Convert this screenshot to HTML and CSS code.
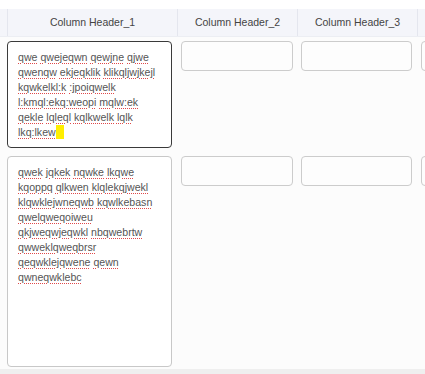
FILE: index.html
```html
<!DOCTYPE html>
<html>
<head>
<meta charset="utf-8">
<link rel="stylesheet" href="styles.css">
</head>
<body>
<div class="grid">
  <div class="header">
    <div class="hcell stub"></div>
    <div class="hcell c1">Column Header_1</div>
    <div class="hcell c2">Column Header_2</div>
    <div class="hcell c3">Column Header_3</div>
    <div class="hcell rest"></div>
  </div>
  <div class="row row1">
    <div class="cell c1">
      <div class="area focused">
        <div><u>qwe</u> <u>qwejeqwn</u> <u>qewjne</u> <u>qjwe</u></div>
        <div><u>qwenqw</u> <u>ekjeqklik</u> <u>klikqljwjkejl</u></div>
        <div><u>kqwkelkl:k</u> <u>:jpoiqwelk</u></div>
        <div><u>l:kmql:ekq:weopi</u> <u>mqlw:ek</u></div>
        <div><u>qekle</u> <u>lqleql</u> <u>kqlkwelk</u> <u>lqlk</u></div>
        <div><u>lkq:lkew</u><span class="hl"></span></div>
      </div>
    </div>
    <div class="cell c2"><div class="input"></div></div>
    <div class="cell c3"><div class="input"></div></div>
    <div class="cell rest"><div class="input"></div></div>
  </div>
  <div class="row row2">
    <div class="cell c1">
      <div class="area tall">
        <div><u>qwek</u> <u>jqkek</u> <u>nqwke</u> <u>lkqwe</u></div>
        <div><u>kqoppq</u> <u>qlkwen</u> <u>klqlekqjwekl</u></div>
        <div><u>klqwklejwneqwb</u> <u>kqwlkebasn</u></div>
        <div><u>qwelqweqoiweu</u></div>
        <div><u>qkjweqwjeqwkl</u> <u>nbqwebrtw</u></div>
        <div><u>qwweklqweqbrsr</u></div>
        <div><u>qeqwklejqwene</u> <u>qewn</u></div>
        <div><u>qwneqwklebc</u></div>
      </div>
    </div>
    <div class="cell c2"><div class="input"></div></div>
    <div class="cell c3"><div class="input"></div></div>
    <div class="cell rest"><div class="input"></div></div>
  </div>
</div>
<div class="scrollbar"></div>
</body>
</html>
```

FILE: styles.css
```css
html, body {
  margin: 0;
  padding: 0;
  width: 425px;
  height: 374px;
  overflow: hidden;
  background: #ffffff;
  font-family: "Liberation Sans", Arial, sans-serif;
}

.grid {
  margin-top: 9px;
  height: 360px;
  background: #fcfcfc;
  overflow: hidden;
}

.header {
  display: flex;
  height: 28px;
  background: #f4f5fa;
  border-bottom: 1px solid #eceef3;
  box-sizing: border-box;
}

.hcell {
  flex: none;
  display: flex;
  align-items: center;
  justify-content: center;
  font-size: 10.5px;
  color: #444;
  border-right: 1px solid #e4e6ee;
  box-sizing: border-box;
  padding-bottom: 1px;
}

.hcell.stub { width: 8px; }
.hcell.c1 { width: 170px; }
.hcell.c2 { width: 120px; }
.hcell.c3 { width: 120px; }
.hcell.rest { flex: 1; border-right: none; }

.row {
  display: flex;
  padding-left: 7px;
  padding-top: 4px;
}

.row1 { height: 115px; box-sizing: border-box; }

.cell { flex: none; }
.cell.c1 { width: 174px; }
.cell.c2 { width: 120px; }
.cell.c3 { width: 120px; }
.cell.rest { flex: 1; }

.area {
  width: 165px;
  height: 107px;
  box-sizing: border-box;
  border: 1px solid #c8c8c8;
  border-radius: 4px;
  background: #ffffff;
  padding: 8px 10px;
  font-size: 10.6px;
  line-height: 15px;
  color: #555;
}

.area.focused { border-color: #3a3a3a; }
.area.tall { height: 211px; }

.area u {
  text-decoration: underline dotted #e0484a;
  text-decoration-thickness: 1px;
  text-underline-offset: 2px;
}

.hl {
  display: inline-block;
  width: 8px;
  height: 14px;
  background: #ffee00;
  vertical-align: -3px;
}

.input {
  width: 112px;
  height: 30px;
  box-sizing: border-box;
  border: 1px solid #cccccc;
  border-radius: 4px;
  background: #fdfdfd;
}

.cell.c3 .input { width: 111px; }

.scrollbar {
  height: 5px;
  background: #efefef;
}
```
